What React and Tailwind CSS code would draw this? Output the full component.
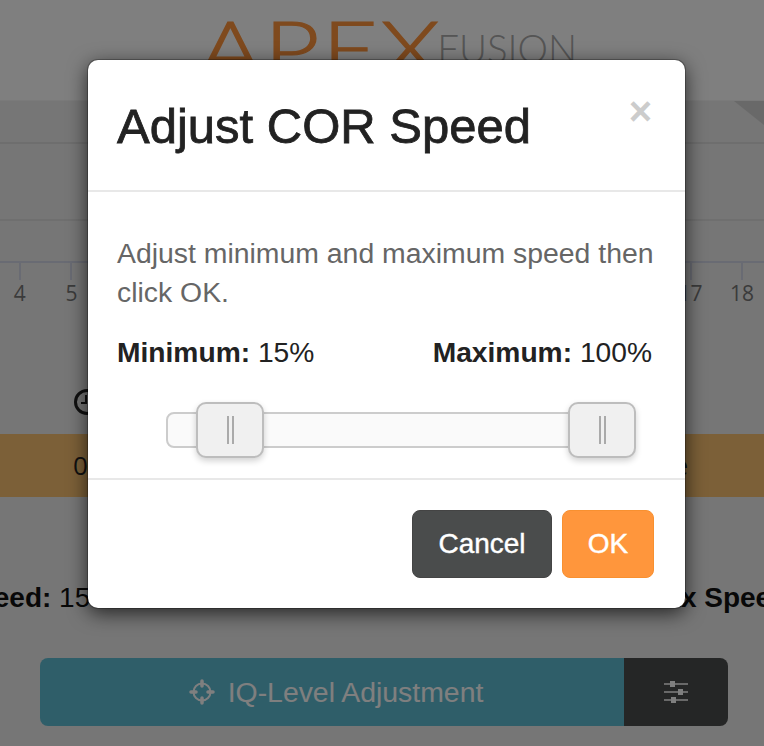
import React from 'react';

const ticks = [4, 5, 6, 7, 8, 9, 10, 11, 12, 13, 14, 15, 16, 17, 18];

const TargetIcon = () => (
  <svg width="26" height="26" viewBox="0 0 26 26" fill="none" stroke="#ffffff" strokeWidth="2" strokeLinecap="round">
    <circle cx="13" cy="13" r="8.5" />
    <path d="M13 2v5M13 19v5M2 13h5M19 13h5" strokeWidth="3.5" />
  </svg>
);

const SlidersIcon = () => (
  <svg width="26" height="24" viewBox="0 0 26 24" fill="#ffffff" stroke="#ffffff">
    <path d="M1 4h24M1 12h24M1 20h24" strokeWidth="1.5" />
    <rect x="7" y="1" width="5" height="6" stroke="none" />
    <rect x="15" y="9" width="5" height="6" stroke="none" />
    <rect x="8" y="17" width="5" height="6" stroke="none" />
  </svg>
);

const Handle = () => (
  <div className="w-[68px] h-[56px] rounded-[10px] border-2 border-[#bdbdbd] bg-[#f0f0f0] shadow-[0_3px_6px_rgba(0,0,0,0.18)] flex justify-center items-center gap-[3px]">
    <span className="w-[2px] h-[28px] bg-[#aaaaaa]"></span>
    <span className="w-[2px] h-[28px] bg-[#aaaaaa]"></span>
  </div>
);

export default function App() {
  return (
    <div className="relative w-[764px] h-[746px] overflow-hidden bg-white font-['Liberation_Sans',sans-serif]">
      {/* page behind the dialog */}
      <div className="h-[100px] flex items-start pl-[199px] pt-[10px]">
        <span className="font-['Lato',sans-serif] font-light text-[76px] leading-[76px] text-[#ff943c] tracking-[2px] origin-left scale-x-[1.26] [-webkit-text-stroke:1.2px_#ff943c]">APEX</span>
        <span className="font-['Lato',sans-serif] font-light text-[38.5px] leading-[44px] text-[#aaaaaa] mt-[16px] ml-[45px]">FUSION</span>
      </div>

      <div className="relative h-[161px] bg-[#ececec] border-t border-[#f4f4f4]">
        <svg className="absolute top-0 right-0" width="30" height="24" viewBox="0 0 30 24">
          <polygon points="0,0 30,0 30,24" fill="#d2d2d2" />
        </svg>
        <div className="h-[43px] border-b-2 border-[#dcdcdc]"></div>
        <div className="h-[77px] border-b-2 border-[#dedede]"></div>
      </div>

      <div className="flex -ml-[6px] h-[50px] bg-[#ececec] border-t-2 border-[#d2d7e6]">
        {ticks.map((t) => (
          <div key={t} className="w-[51.6px] shrink-0 flex flex-col items-center">
            <span className="w-[2px] h-[17px] bg-[#d2d7e6]"></span>
            <span className="font-['Open_Sans',sans-serif] text-[21px] leading-[26px] text-[#777777]">{t}</span>
          </div>
        ))}
      </div>

      <div className="h-[123px] bg-[#ececec] pl-[73px] pt-[77px]">
        <svg width="28" height="28" viewBox="0 0 28 28" fill="none" stroke="#222222" strokeWidth="3">
          <circle cx="14" cy="14" r="11.5" />
          <path d="M13 7v8H8" strokeWidth="2" />
        </svg>
      </div>

      <div className="h-[63px] bg-[#f8c070] flex justify-between items-center pl-[73px] pr-[76px] font-['Open_Sans',sans-serif] text-[26px] text-[#222222]">
        <span>0</span>
        <span>e</span>
      </div>

      <div className="h-[249px] bg-[#ececec] flex flex-col">
        <div className="flex justify-between -ml-[98px] -mr-[113px] mt-[84px] text-[28px] leading-[34px] text-[#111111]">
          <span><b>Min Speed:</b> 15%</span>
          <span><b>Max Speed:</b> 100%</span>
        </div>
        <div className="flex ml-[40px] w-[688px] mt-[43px] h-[68px] shrink-0">
          <div className="flex-1 bg-[#5fbcd3] rounded-l-[8px] flex items-center justify-center gap-[13px] text-[28.4px] text-white pl-[8px]">
            <TargetIcon />
            <span>IQ-Level Adjustment</span>
          </div>
          <div className="w-[104px] bg-[#4a4c4c] rounded-r-[8px] flex items-center justify-center">
            <SlidersIcon />
          </div>
        </div>
      </div>

      {/* backdrop */}
      <div className="absolute inset-0 bg-black/50"></div>

      {/* dialog */}
      <div className="absolute left-[88px] top-[60px] w-[597px] h-[548px] bg-white rounded-[10px] shadow-[0_5px_20px_rgba(0,0,0,0.7),0_0_0_1px_rgba(0,0,0,0.25)] flex flex-col">
        <div className="h-[132px] px-[29px] flex justify-between border-b-2 border-[#e8e8e8]">
          <h1 className="text-[49px] leading-[52px] mt-[40px] text-[#222222] font-normal [-webkit-text-stroke:0.8px_#222222]">Adjust COR Speed</h1>
          <span className="text-[40px] leading-[40px] font-bold text-[#cccccc] mt-[31px] mr-[4px]">×</span>
        </div>
        <div className="flex-1 px-[29px] pt-[42px]">
          <p className="text-[28.4px] leading-[39px] text-[#666666]">Adjust minimum and maximum speed then click OK.</p>
          <div className="flex justify-between mt-[22px] pr-[4px] text-[28.2px] leading-[36px] text-[#222222]">
            <span><b>Minimum:</b> 15%</span>
            <span><b>Maximum:</b> 100%</span>
          </div>
          <div className="relative mt-[32px] ml-[49px] w-[470px] h-[56px] flex items-center">
            <div className="w-full h-[36px] rounded-[8px] border-2 border-[#cccccc] bg-[#fafafa]"></div>
            <div className="absolute left-[30px] top-0"><Handle /></div>
            <div className="absolute right-0 top-0"><Handle /></div>
          </div>
        </div>
        <div className="h-[130px] border-t-2 border-[#e8e8e8] flex justify-end items-start gap-[10px] pt-[30px] pr-[31px]">
          <button className="w-[140px] h-[68px] rounded-[8px] bg-[#4a4c4c] border border-[#444444] text-white text-[28px] [-webkit-text-stroke:0.4px_#ffffff]">Cancel</button>
          <button className="w-[92px] h-[68px] rounded-[8px] bg-[#ff963c] border border-[#f89030] text-white text-[28px] [-webkit-text-stroke:0.4px_#ffffff]">OK</button>
        </div>
      </div>
    </div>
  );
}
